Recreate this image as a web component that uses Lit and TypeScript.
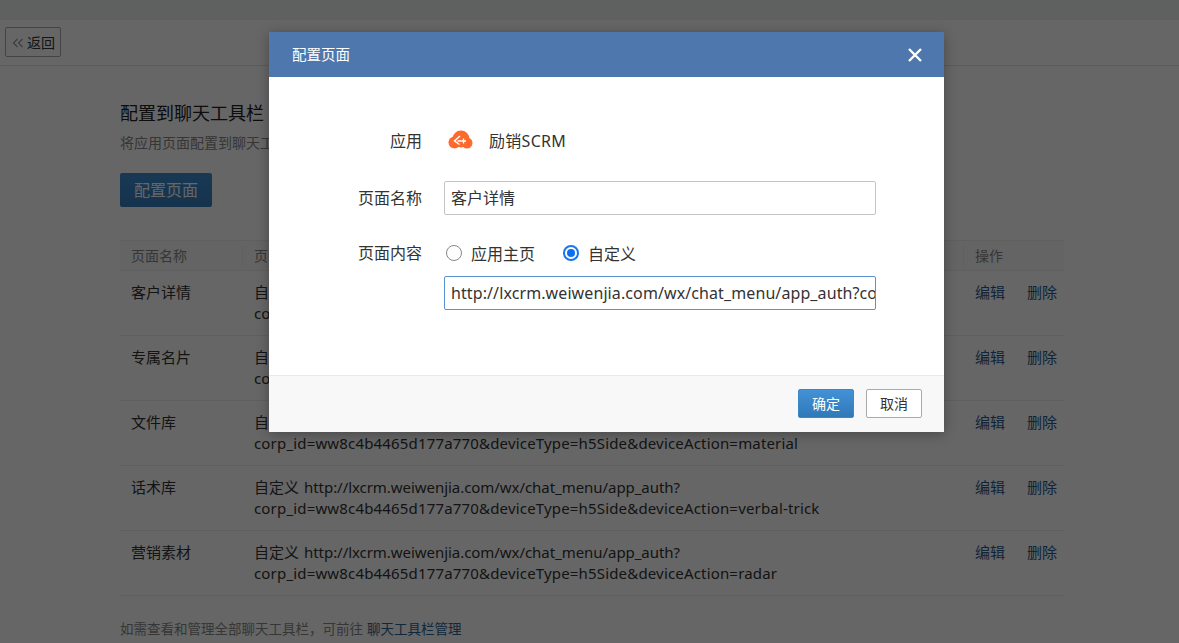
import { LitElement, html, css } from "lit";
import { customElement } from "lit/decorators.js";

const rows = [
  ["客户详情", "customer"],
  ["专属名片", "card"],
  ["文件库", "material"],
  ["话术库", "verbal-trick"],
  ["营销素材", "radar"],
];

@customElement("app-root")
export class AppRoot extends LitElement {
  static styles = css`
    :host { display: block; position: relative; width: 1179px; height: 643px; overflow: hidden; background: #fff;
      font-family: "Noto Sans", "Noto Sans CJK SC", sans-serif; font-size: 14px; color: #333; }
    * { box-sizing: border-box; }
    .top { height: 20px; background: #eef2f0; }
    .bar { height: 46px; padding: 7px 5px 0; border-bottom: 1px solid #e6e6e6; background: #fff; }
    .back { display: inline-flex; align-items: center; gap: 3px; width: 56px; height: 30px; padding-left: 6px; padding-top: 1px; border: 1px solid #aaa; border-radius: 2px; color: #333; line-height: 1; }
    .main { padding: 35px 115px 0 120px; }
    h1 { margin: 0; font-size: 18px; font-weight: 400; line-height: 24px; color: #222; }
    .sub { margin-top: 6px; line-height: 24px; color: #888; }
    .cfg { display: flex; align-items: center; justify-content: center; width: 92px; height: 34px; margin-top: 18px; padding-bottom: 2px; border-radius: 2px; background: linear-gradient(#3d8ed4, #357fbf); color: #fff; font-size: 16px; }
    .table { margin-top: 33px; border-top: 1px solid #eee; }
    .head { display: grid; grid-template-columns: 123px 1fr 100px; height: 30px; align-items: center; background: #fafafa; border-bottom: 1px solid #eee; color: #888; font-size: 14px; }
    .head span { padding-left: 11px; height: 20px; line-height: 20px; border-right: 1px solid #eee; }
    .head span:last-child { border: 0; }
    .row { display: grid; grid-template-columns: 123px 1fr 100px; height: 65px; padding-top: 11px; border-bottom: 1px solid #eee; line-height: 21px; font-size: 15px; color: #333; }
    .row .name { padding-left: 11px; }
    .row .val { padding-left: 11px; }
    .row .val .t { margin-right: 5px; }
    .l1 { letter-spacing: -.05px; }
    .l2 { letter-spacing: .17px; }
    .ops { display: flex; gap: 22px; padding-left: 11px; color: #2a5b8f; white-space: nowrap; }
    .foot { margin-top: 23px; font-size: 13.5px; color: #888; line-height: 20px; }
    .foot a { color: #2a6496; margin-left: 4px; }
    .mask { position: absolute; inset: 0; background: rgba(0,0,0,.6); }
    .modal { position: absolute; left: 269px; top: 32px; width: 675px; height: 400px; background: #fff; display: flex; flex-direction: column; box-shadow: 0 2px 12px rgba(0,0,0,.3); }
    .mh { display: flex; align-items: center; justify-content: space-between; height: 45px; padding: 0 21px 0 23px; background: #4e78ad; color: #fff; font-size: 14.5px; }
    .mh span { padding-bottom: 3px; }
    .mh svg { display: block; }
    .mb { flex: 1; padding-top: 48px; font-size: 16px; color: #333; }
    .f { display: grid; grid-template-columns: 153px 1fr; column-gap: 22px; }
    .f label { text-align: right; line-height: 24px; }
    .app { display: flex; align-items: center; gap: 16px; height: 30px; }
    .app svg { display: block; margin-left: 4px; }
    .app span { letter-spacing: .3px; }
    .f.a { height: 56px; align-items: start; }
    .f.a label { padding-top: 4px; }
    .input { width: 432px; height: 34px; padding: 0 6px; border: 1px solid #c4c4c4; border-radius: 2px; line-height: 32px; white-space: nowrap; overflow: hidden; color: #333; background: #fff; }
    .input.on { border-color: #5a94d0; margin-top: 11px; letter-spacing: .1px; }
    .f.b { height: 45px; }
    .f.b label { padding-top: 5px; }
    .f.c { margin-top: 15px; }
    .radios { display: flex; align-items: center; height: 24px; gap: 28px; padding-left: 2px; }
    .radio { display: flex; align-items: center; gap: 9px; }
    .dot { width: 16px; height: 16px; border-radius: 50%; border: 1px solid #888; background: #fff; }
    .dot.on { border: 2px solid #1a76f0; padding: 2px; }
    .dot.on::after { content: ""; display: block; width: 8px; height: 8px; border-radius: 50%; background: #0a6ff0; }
    .mf { display: flex; justify-content: flex-end; align-items: center; gap: 12px; height: 57px; padding: 0 22px 2px 0; background: #f8f8f8; border-top: 1px solid #e8e8e8; }
    .btn { display: flex; align-items: center; justify-content: center; width: 56px; height: 29px; border-radius: 2px; font-size: 14px; }
    .ok { color: #fff; border: 1px solid #3b87c8; background: linear-gradient(#4391d6, #3079b8); }
    .no { color: #333; border: 1px solid #aaa; background: #fff; }
  `;

  render() {
    return html`
      <div class="top"></div>
      <div class="bar">
        <div class="back">
          <svg width="12" height="12" viewBox="0 0 12 12" fill="none" stroke="#999" stroke-width="1.2"><path d="M5.500 2 1.500 6l4 4M10.500 2l-4 4 4 4"/></svg>
          <span>返回</span>
        </div>
      </div>
      <div class="main">
        <h1>配置到聊天工具栏</h1>
        <div class="sub">将应用页面配置到聊天工具栏</div>
        <div class="cfg">配置页面</div>
        <div class="table">
          <div class="head"><span>页面名称</span><span>页面内容</span><span>操作</span></div>
          ${rows.map(([n, a]) => html`
            <div class="row">
              <div class="name">${n}</div>
              <div class="val"><span class="t">自定义</span><span class="l1">http://lxcrm.weiwenjia.com/wx/chat_menu/app_auth?</span><br><span class="l2">corp_id=ww8c4b4465d177a770&deviceType=h5Side&deviceAction=${a}</span></div>
              <div class="ops"><span>编辑</span><span>删除</span></div>
            </div>`)}
        </div>
        <div class="foot">如需查看和管理全部聊天工具栏，可前往<a>聊天工具栏管理</a></div>
      </div>
      <div class="mask"></div>
      <div class="modal">
        <div class="mh">
          <span>配置页面</span>
          <svg width="16" height="16" viewBox="0 0 16 16" stroke="#fff" stroke-width="2.4"><path d="M2 2l12 12M14 2 2 14"/></svg>
        </div>
        <div class="mb">
          <div class="f a">
            <label>应用</label>
            <div class="app">
              <svg width="25" height="20" viewBox="0 0 25 20"><g fill="#fd6a2d"><circle cx="13" cy="9" r="8.500"/><circle cx="6.500" cy="12.500" r="6"/><circle cx="19" cy="13" r="5.500"/></g><path fill="none" stroke="#fff" stroke-width="1.400" d="M12 6 6.500 11l5 3.500M9.500 11h8.500M15.500 8.500v5"/></svg>
              <span>励销SCRM</span>
            </div>
          </div>
          <div class="f b">
            <label>页面名称</label>
            <div class="input">客户详情</div>
          </div>
          <div class="f c">
            <label>页面内容</label>
            <div>
              <div class="radios">
                <div class="radio"><i class="dot"></i>应用主页</div>
                <div class="radio"><i class="dot on"></i>自定义</div>
              </div>
              <div class="input on">http://lxcrm.weiwenjia.com/wx/chat_menu/app_auth?corp_id=ww8c4b4465d177a770</div>
            </div>
          </div>
        </div>
        <div class="mf">
          <div class="btn ok">确定</div>
          <div class="btn no">取消</div>
        </div>
      </div>
    `;
  }
}
